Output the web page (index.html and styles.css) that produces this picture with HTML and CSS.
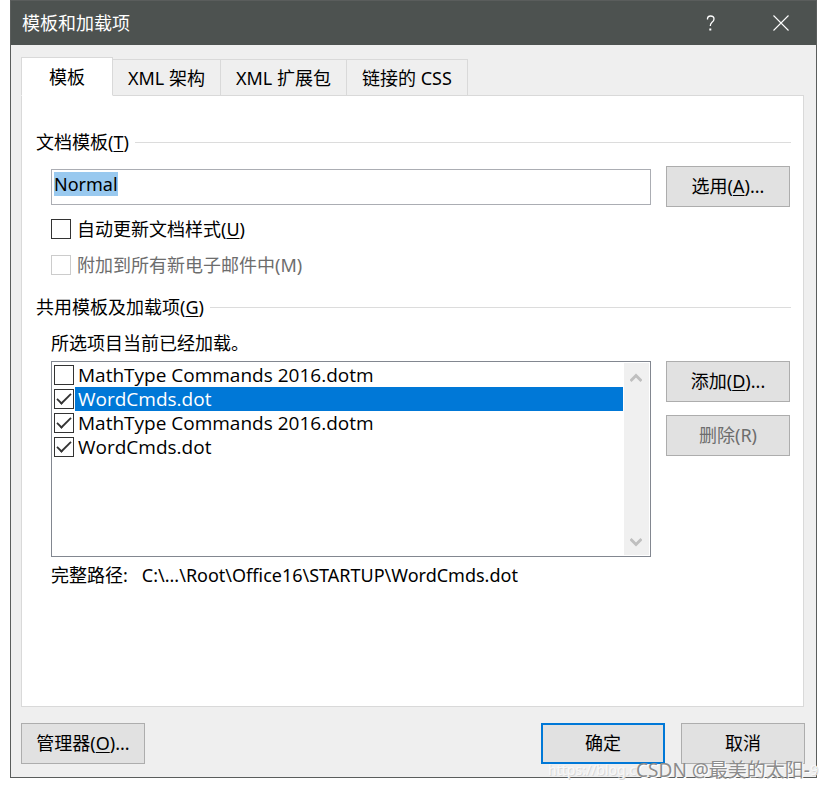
FILE: index.html
```html
<!DOCTYPE html>
<html lang="zh-CN">
<head>
<meta charset="utf-8">
<title>模板和加载项</title>
<link rel="stylesheet" href="styles.css">
</head>
<body>
<main class="dialog">
  <header class="titlebar">
    <h1 class="title">模板和加载项</h1>
    <button class="caption" type="button" aria-label="帮助"><svg width="10" height="17" viewBox="0 0 10 17"><path d="M1.5 4.5V3.5Q1.8 1 4.5 1Q8 1 8 4Q8 5.8 6 7.3Q4.3 8.8 4.3 11" stroke-width="1.3"/><path d="M4.3 13.5V15.5" stroke-width="2"/></svg></button>
    <button class="caption" type="button" aria-label="关闭"><svg width="16" height="16" viewBox="0 0 16 16"><path d="M.5 .5L15.500 15.500M15.500 .5L.5 15.500" stroke-width="1.1"/></svg></button>
  </header>
  <div class="content">
    <div class="tabs" role="tablist">
      <button class="tab active" type="button" role="tab" aria-selected="true">模板</button>
      <button class="tab" type="button" role="tab">XML 架构</button>
      <button class="tab" type="button" role="tab">XML 扩展包</button>
      <button class="tab" type="button" role="tab">链接的 CSS</button>
    </div>
    <section class="panel" role="tabpanel">
      <h2 class="group"><label for="template">文档模板(<u>T</u>)</label></h2>
      <div class="row">
        <input class="textbox" id="template" type="text" value="Normal" spellcheck="false">
        <button class="btn" type="button">选用(<u>A</u>)...</button>
      </div>
      <div class="options">
        <label class="option"><input class="check" type="checkbox"><span>自动更新文档样式(<u>U</u>)</span></label>
        <label class="option disabled"><input class="check" type="checkbox" disabled><span>附加到所有新电子邮件中(M)</span></label>
      </div>
      <h2 class="group"><span>共用模板及加载项(<u>G</u>)</span></h2>
      <p class="note">所选项目当前已经加载。</p>
      <div class="row">
        <div class="listbox">
          <ul class="items">
            <li><label class="item"><input class="check" type="checkbox"><span class="name">MathType Commands 2016.dotm</span></label></li>
            <li><label class="item selected"><input class="check" type="checkbox" checked><span class="name">WordCmds.dot</span></label></li>
            <li><label class="item"><input class="check" type="checkbox" checked><span class="name">MathType Commands 2016.dotm</span></label></li>
            <li><label class="item"><input class="check" type="checkbox" checked><span class="name">WordCmds.dot</span></label></li>
          </ul>
          <div class="scrollbar">
            <button class="arrow" type="button" aria-label="向上"><svg width="12" height="10" viewBox="0 0 12 10"><path d="M.5 8L6 2.500L11.500 8"/></svg></button>
            <button class="arrow" type="button" aria-label="向下"><svg width="12" height="10" viewBox="0 0 12 10"><path d="M.5 2L6 7.500L11.500 2"/></svg></button>
          </div>
        </div>
        <div class="side">
          <button class="btn" type="button">添加(<u>D</u>)...</button>
          <button class="btn" type="button" disabled>删除(R)</button>
        </div>
      </div>
      <p class="path"><span>完整路径:</span><span>C:\...\Root\Office16\STARTUP\WordCmds.dot</span></p>
    </section>
    <footer class="footer">
      <button class="btn manager" type="button">管理器(<u>O</u>)...</button>
      <button class="btn primary" type="button">确定</button>
      <button class="btn" type="button">取消</button>
    </footer>
  </div>
  <div class="marks"><span class="url">https://blog.c</span><span class="author">CSDN @最美的太阳-</span><span class="url">9</span></div>
</main>
<script src="script.js"></script>
</body>
</html>
```
FILE: styles.css
```css
* { box-sizing: border-box; }
body {
  margin: 0;
  background: #fff;
  color: #000;
  font: 18px/24px "Noto Sans", "Noto Sans CJK SC", sans-serif;
}
button, input { font: inherit; color: inherit; }
h1, h2, p, ul { margin: 0; padding: 0; font: inherit; }
u { text-underline-offset: 2px; text-decoration-thickness: 1px; text-decoration-skip-ink: none; }
svg { display: block; fill: none; stroke: currentColor; }

.dialog {
  position: relative;
  display: flex;
  flex-direction: column;
  min-height: calc(100vh - 10px);
  margin: 0 10px 10px;
  border: 1px solid #5a5d5c;
  background: #efefef;
}
.titlebar {
  display: flex;
  align-items: center;
  height: 44px;
  background: #4d5250;
  color: #fff;
}
.title { flex: 1; padding-left: 11px; }
.caption {
  display: flex;
  align-items: center;
  justify-content: center;
  width: 70px;
  height: 44px;
  padding: 0;
  border: 0;
  background: none;
}
.content { display: flex; flex: 1; flex-direction: column; padding: 12px 11px 13px 10px; }
.tabs { display: flex; align-items: flex-end; margin-bottom: -1px; }
.tab {
  height: 37px;
  padding: 0 15px;
  border: 1px solid #d9d9d9;
  border-left: 0;
  background: #efefef;
}
.tab.active {
  z-index: 1;
  height: 39px;
  padding: 0 27px;
  border-left: 1px solid #d9d9d9;
  border-bottom-color: #fff;
  background: #fff;
}
.panel {
  flex: 1;
  margin-right: 1px;
  padding: 34px 12px 13px 14px;
  border: 1px solid #d9d9d9;
  background: #fff;
}
.group { display: flex; align-items: center; gap: 6px; }
.group::after { content: ""; flex: 1; border-top: 1px solid #dcdcdc; }
.row { display: flex; gap: 15px; padding: 0 1px 0 15px; }
.group + .row { align-items: center; margin-top: 12px; }
.textbox {
  flex: 1;
  min-width: 0;
  height: 36px;
  padding: 2px 2px 8px;
  border: 1px solid #abadb3;
  outline: 0;
  background: #fff;
  line-height: 24px;
}
.textbox::selection { background: #99c9ef; color: #000; }
.btn {
  width: 124px;
  height: 41px;
  padding: 0 0 1px;
  border: 1px solid #adadad;
  background: #e1e1e1;
}
.btn:disabled, .disabled { color: #6d6d6d; }
.btn.primary { border: 2px solid #0078d7; }
.options { display: grid; gap: 12px; margin: 10px 0 18px; padding-left: 15px; }
.option { display: flex; align-items: center; gap: 6px; }
.check {
  appearance: none;
  flex: none;
  width: 20px;
  height: 20px;
  margin: 0;
  border: 1px solid #333;
  background: #fff;
}
.check:checked { display: grid; place-items: center; }
.check:checked::before {
  content: "";
  width: 14px;
  height: 6px;
  border: solid #333;
  border-width: 0 0 2px 2px;
  transform: translateY(-2px) rotate(-45deg) scale(.9);
}
.check:disabled { border-color: #ccc; }
.note { margin: 12px 0 6px; padding-left: 15px; }
.listbox {
  display: flex;
  flex: 1;
  min-width: 0;
  height: 196px;
  padding: 1px;
  border: 1px solid #828790;
  background: #fff;
}
.items { flex: 1; padding: 0 1px; list-style: none; }
.item { display: flex; align-items: center; gap: 1px; }
.name { flex: 1; padding-left: 3px; font-family: "Open Sans", sans-serif; font-size: 19px; }
.selected .name { background: #0078d7; color: #fff; }
.scrollbar {
  display: flex;
  flex-direction: column;
  justify-content: space-between;
  width: 25px;
  background: #f0f0f0;
  color: #bfbfbf;
}
.arrow { padding: 10px 6px 8px; border: 0; background: none; }
.arrow svg { stroke-width: 3; }
.side { display: flex; flex-direction: column; gap: 13px; }
.path { display: flex; gap: 14px; margin-top: 6px; padding-left: 15px; }
.footer { display: flex; gap: 16px; padding-top: 16px; }
.manager { margin-right: auto; }
.marks {
  position: absolute;
  right: -2px;
  bottom: -5px;
  display: flex;
  align-items: center;
  white-space: nowrap;
  pointer-events: none;
}
.url { color: #f8f8f8; font-size: 14px; text-shadow: 1px 1px 0 #d8d8d8; }
.author { color: #8c8c8c; font-size: 19px; text-shadow: 1px 1px 0 #fff; }
```
FILE: script.js
```js
const template = document.getElementById("template");
template.focus();
template.select();
```
